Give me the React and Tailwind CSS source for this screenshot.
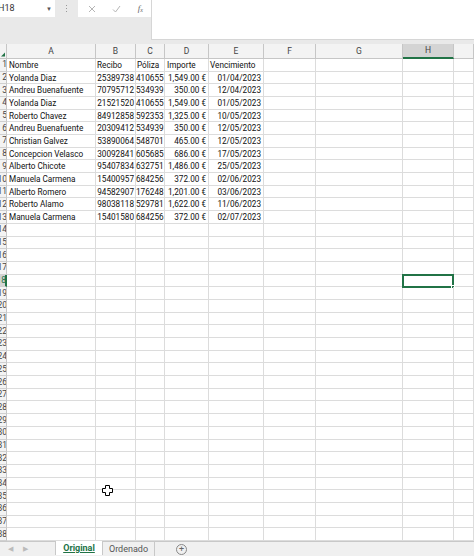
import React from "react";

const rows = [
  ["Nombre", "Recibo", "Póliza", "Importe", "Vencimiento", true],
  ["Yolanda Diaz", "25389738", "410655", "1,549.00 €", "01/04/2023"],
  ["Andreu Buenafuente", "70795712", "534939", "350.00 €", "12/04/2023"],
  ["Yolanda Diaz", "21521520", "410655", "1,549.00 €", "01/05/2023"],
  ["Roberto Chavez", "84912858", "592353", "1,325.00 €", "10/05/2023"],
  ["Andreu Buenafuente", "20309412", "534939", "350.00 €", "12/05/2023"],
  ["Christian Galvez", "53890064", "548701", "465.00 €", "12/05/2023"],
  ["Concepcion Velasco", "30092841", "605685", "686.00 €", "17/05/2023"],
  ["Alberto Chicote", "95407834", "632751", "1,486.00 €", "25/05/2023"],
  ["Manuela Carmena", "15400957", "684256", "372.00 €", "02/06/2023"],
  ["Alberto Romero", "94582907", "176248", "1,201.00 €", "03/06/2023"],
  ["Roberto Alamo", "98038118", "529781", "1,622.00 €", "11/06/2023"],
  ["Manuela Carmena", "15401580", "684256", "372.00 €", "02/07/2023"],
];

const cols = ["A", "B", "C", "D", "E", "F", "G", "H", ""];
const TOTAL = 38;

const cell =
  "h-[12.7px] border-r border-b border-[#dcdcdc] overflow-hidden whitespace-nowrap leading-[12px] text-[8.2px] text-[#111] font-['Roboto',sans-serif]";

export default function App() {
  const allRows = Array.from({ length: TOTAL }, (_, i) => rows[i] || null);
  return (
    <div
      className="w-[474px] h-[556px] overflow-hidden bg-[#e9e9e9] flex flex-col relative"
      style={{ fontFamily: "Roboto, Lato, sans-serif" }}
    >
      {/* formula bar area */}
      <div className="flex h-[42px]">
        <div className="w-[151px] flex flex-col">
          <div className="flex h-[17px]">
            <div className="w-[58px] bg-white flex items-center justify-between pr-[3px] -ml-[3px]">
              <span className="text-[9px] text-[#333] pl-[1px]">H18</span>
              <span className="text-[6px] text-[#555]">▼</span>
            </div>
            <div className="w-[23px] flex items-center justify-center">
              <div className="flex flex-col gap-[2px]">
                <div className="w-[1px] h-[1px] bg-[#999]" />
                <div className="w-[1px] h-[1px] bg-[#999]" />
                <div className="w-[1px] h-[1px] bg-[#999]" />
              </div>
            </div>
            <div className="flex-1 bg-white flex items-center justify-around pl-[2px]">
              <svg width="8" height="8" viewBox="0 0 8 8"><path d="M1 1L7 7M7 1L1 7" stroke="#b5b5b5" strokeWidth="1" /></svg>
              <svg width="9" height="8" viewBox="0 0 9 8"><path d="M1 4.5L3.5 7L8 1" stroke="#b5b5b5" strokeWidth="1" fill="none" /></svg>
              <span className="text-[9px] italic text-[#666]" style={{ fontFamily: "'Liberation Serif', serif" }}>f<sub className="text-[6px]">x</sub></span>
            </div>
          </div>
        </div>
        <div className="flex-1 bg-white border-l border-[#d6d6d6] border-b" />
      </div>
      <div className="h-[4px]" />

      {/* sheet */}
      <div className="grid grid-cols-[7px_89px_40px_29px_44px_55px_52px_87px_51px_20px] bg-white">
        <div className="h-[15px] bg-[#f3f3f3] border-r border-b border-[#c6c6c6] flex items-end justify-end p-[1px]">
          <svg width="5" height="5" viewBox="0 0 5 5"><path d="M5 0L5 5L0 5Z" fill="#217346" /></svg>
        </div>
        {cols.map((c, i) => (
          <div
            key={i}
            className={
              "h-[15px] border-r border-[#c6c6c6] flex items-center justify-center text-[8.5px] text-[#444] " +
              (c === "H" ? "bg-[#d4d4d4] border-b-2 border-b-[#217346]" : "bg-[#f3f3f3] border-b border-b-[#c6c6c6]")
            }
          >
            {c}
          </div>
        ))}
        {allRows.map((r, i) => {
          const n = i + 1;
          const sel = n === 18;
          const hdr = r && r[5];
          return (
            <React.Fragment key={i}>
              <div
                className={
                  "h-[12.7px] border-b border-[#d0d0d0] overflow-hidden flex items-center justify-end text-[8.5px] text-[#444] " +
                  (sel ? "bg-[#d4d4d4] border-r-2 border-r-[#217346] text-[#217346]" : "bg-[#f3f3f3] border-r border-r-[#c6c6c6]")
                }
              >
                <span className="mr-[-1px]">{n}</span>
              </div>
              <div className={cell + " pl-[2px]"}>{r ? r[0] : ""}</div>
              <div className={cell + (hdr ? " pl-[1px]" : " text-right pr-[1px]")}>{r ? r[1] : ""}</div>
              <div className={cell + (hdr ? " pl-[1px]" : " text-right pr-[1px]")}>{r ? r[2] : ""}</div>
              <div className={cell + (hdr ? " pl-[2px]" : " text-right pr-[2px]")}>{r ? r[3] : ""}</div>
              <div className={cell + (hdr ? " pl-[1px]" : " text-right pr-[2px]")}>{r ? r[4] : ""}</div>
              <div className={cell} />
              <div className={cell} />
              <div className={cell + " relative overflow-visible"}>
                {sel && (
                  <div className="absolute -left-[1px] -top-[1px] w-[52px] h-[14px] border-2 border-[#217346]">
                    <div className="absolute -right-[3px] -bottom-[3px] w-[4px] h-[4px] bg-[#217346] border border-white" />
                  </div>
                )}
              </div>
              <div className={cell} />
            </React.Fragment>
          );
        })}
      </div>

      {/* tabs bar */}
      <div className="flex-1 bg-[#f0f0f0] border-t border-[#c8c8c8] flex items-start">
        <div className="w-[55px] flex items-center gap-[10px] pl-[8px] pt-[2px] text-[7px] text-[#bbb]">
          <span>◀</span>
          <span>▶</span>
        </div>
        <div className="w-[48px] h-full bg-white border-x border-[#c8c8c8] -mt-[1px] flex justify-center">
          <span className="text-[9px] font-bold text-[#217346] underline leading-[14px]">Original</span>
        </div>
        <div className="w-[52px] h-full border-r border-[#c8c8c8] flex justify-center">
          <span className="text-[9px] text-[#555] leading-[14px]">Ordenado</span>
        </div>
        <div className="ml-[21px] mt-[2px] w-[11px] h-[11px] rounded-full border border-[#888] flex items-center justify-center text-[9px] text-[#666] leading-none">
          +
        </div>
      </div>

      {/* mouse cursor */}
      <svg className="absolute left-[102px] top-[485px]" width="11" height="11" viewBox="0 0 11 11">
        <path d="M3.5 0.5H7.5V3.5H10.5V7.5H7.5V10.5H3.5V7.5H0.5V3.5H3.5Z" fill="#fff" stroke="#000" strokeWidth="1" />
      </svg>
    </div>
  );
}
